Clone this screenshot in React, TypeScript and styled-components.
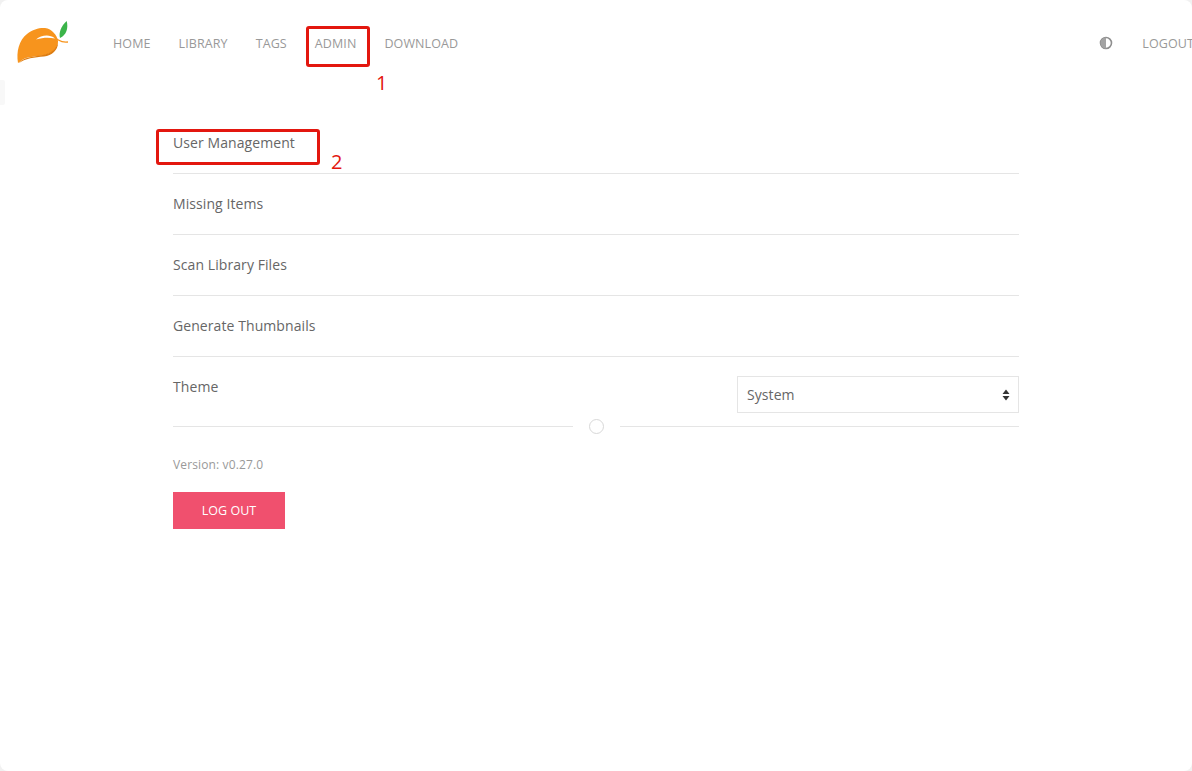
import React from 'react';
import styled, { createGlobalStyle } from 'styled-components';

const GlobalStyle = createGlobalStyle`
  html, body {
    margin: 0;
    padding: 0;
    background: #f1f1f1;
    overflow: hidden;
  }

  body {
    font-family: 'Open Sans', 'Noto Sans', sans-serif;
    color: #666;
  }
`;

const Page = styled.div`
  position: relative;
  width: 1192px;
  height: 771px;
  overflow: hidden;
  background: #fff;
  border-radius: 8px;
`;

const Navbar = styled.nav`
  display: flex;
  align-items: center;
  height: 88px;
  padding-left: 16px;
  white-space: nowrap;
`;

const LogoLink = styled.a`
  display: flex;
  width: 54px;
  height: 46px;
  margin-right: 43px;
  margin-top: -2px;
`;

const NavLinks = styled.div`
  display: flex;
  flex: 1;
  gap: 28px;
`;

const NavLink = styled.a`
  font-size: 12.5px;
  line-height: 20px;
  letter-spacing: 0.1px;
  text-transform: uppercase;
  color: #999;
`;

const NavRight = styled.div`
  display: flex;
  align-items: center;
  gap: 29px;
  margin-right: -2px;
`;

const ThemeToggle = styled.span`
  display: flex;
  flex: 0 0 14px;
  margin-top: -2px;
`;

const SideTab = styled.div`
  position: absolute;
  left: 0;
  top: 80px;
  width: 5px;
  height: 25px;
  background: #f8f8f8;
  border-radius: 0 2px 2px 0;
`;

const Content = styled.main`
  width: 846px;
  margin: 25px 0 0 173px;
`;

const SettingsList = styled.ul`
  margin: 0;
  padding: 0;
  list-style: none;
`;

const SettingsRow = styled.li`
  display: flex;
  justify-content: space-between;
  padding-top: 19px;
  height: 41px;
  font-size: 14px;
  line-height: 22px;
  letter-spacing: 0.08px;
  color: #666;
  border-bottom: 1px solid #e5e5e5;
`;

const ThemeRow = styled(SettingsRow)`
  height: 36px;
  border-bottom: none;
`;

const ThemeSelect = styled.select`
  appearance: none;
  width: 282px;
  height: 37px;
  padding: 0 10px 0 9px;
  font: inherit;
  letter-spacing: 0.08px;
  color: #666;
  background: #fff
    url("data:image/svg+xml;utf8,<svg xmlns='http://www.w3.org/2000/svg' width='8' height='12'><path d='M4 0.5 7.5 5H.5z M.5 7H7.5L4 11.5z' fill='%23333'/></svg>")
    no-repeat right 8px center;
  border: 1px solid #e5e5e5;
  border-radius: 0;
  outline: none;
`;

const Divider = styled.div`
  display: flex;
  align-items: center;
  gap: 16px;
  height: 1px;
  margin-top: 14px;

  &::before,
  &::after {
    content: '';
    flex: 1;
    height: 1px;
    background: #e5e5e5;
  }
`;

const DividerDot = styled.span`
  box-sizing: border-box;
  flex: 0 0 15px;
  height: 15px;
  border: 1px solid #d8d8d8;
  border-radius: 50%;
`;

const Version = styled.p`
  margin: 29px 0 0;
  font-size: 12px;
  line-height: 18px;
  letter-spacing: 0.13px;
  color: #999;
`;

const LogoutButton = styled.button`
  display: block;
  width: 112px;
  height: 37px;
  margin-top: 18px;
  padding: 0;
  font: inherit;
  font-size: 12.5px;
  text-transform: uppercase;
  color: #fff;
  background: #f0506e;
  border: none;
`;

const Callout = styled.div<{ $x: number; $y: number; $w: number; $h: number }>`
  position: absolute;
  left: ${(p) => p.$x}px;
  top: ${(p) => p.$y}px;
  width: ${(p) => p.$w}px;
  height: ${(p) => p.$h}px;
  box-sizing: border-box;
  border: 3px solid #e3170f;
  border-radius: 3px;
`;

const CalloutNumber = styled.span<{ $x: number; $y: number }>`
  position: absolute;
  left: ${(p) => p.$x}px;
  top: ${(p) => p.$y}px;
  font-size: 20px;
  line-height: 24px;
  color: #e3170f;
`;

function MangoLogo() {
  return (
    <svg width="54" height="46" viewBox="0 0 54 46" fill="none">
      <path
        d="M2 43 C0 32 3 20 11 14 C17 9 24 7.5 29 8 C36 9 41 15 42 21 C42.5 27 37 33 29 35 C20 37 9 36 5 41 Z"
        fill="#f7941d"
      />
      <path
        d="M5 41 C9 37 20 36.5 29 34.5 C35 33 40 29 42 23 C42 30 36 35.5 28 36.5 C19 37.5 9 38 2.5 43.5 Z"
        fill="#dd7d12"
      />
      <path d="M20 19.5 C25 15.5 33 13.5 39 18.5 C33 17.5 27 17.5 20 19.5 Z" fill="#fff" />
      <path d="M39 18.5 C43 19.5 44 23 52 22" stroke="#f7941d" strokeWidth="1.3" />
      <path d="M44 18 C42.5 13 45 6 50.7 1 C52.5 8 50.5 15 44 18 Z" fill="#3bb44a" />
    </svg>
  );
}

function ThemeIcon() {
  return (
    <svg width="14" height="14" viewBox="0 0 14 14">
      <circle cx="7" cy="7" r="5.5" fill="#fff" stroke="#8f8f8f" strokeWidth="1.6" />
      <path d="M7 1.5 A5.5 5.5 0 0 0 7 12.5 Z" fill="#a3a3a3" />
    </svg>
  );
}

const navItems = ['Home', 'Library', 'Tags', 'Admin', 'Download'];
const settings = ['User Management', 'Missing Items', 'Scan Library Files', 'Generate Thumbnails'];

export default function App() {
  return (
    <Page>
      <GlobalStyle />
      <Navbar>
        <LogoLink>
          <MangoLogo />
        </LogoLink>
        <NavLinks>
          {navItems.map((item) => (
            <NavLink key={item}>{item}</NavLink>
          ))}
        </NavLinks>
        <NavRight>
          <ThemeToggle>
            <ThemeIcon />
          </ThemeToggle>
          <NavLink>Logout</NavLink>
        </NavRight>
      </Navbar>
      <SideTab />
      <Content>
        <SettingsList>
          {settings.map((item) => (
            <SettingsRow key={item}>{item}</SettingsRow>
          ))}
          <ThemeRow>
            Theme
            <ThemeSelect defaultValue="System">
              <option>System</option>
              <option>Light</option>
              <option>Dark</option>
            </ThemeSelect>
          </ThemeRow>
        </SettingsList>
        <Divider>
          <DividerDot />
        </Divider>
        <Version>Version: v0.27.0</Version>
        <LogoutButton>Log out</LogoutButton>
      </Content>
      <Callout $x={306} $y={26} $w={64} $h={41} />
      <CalloutNumber $x={376} $y={71}>1</CalloutNumber>
      <Callout $x={156} $y={129} $w={164} $h={36} />
      <CalloutNumber $x={331} $y={150}>2</CalloutNumber>
    </Page>
  );
}
